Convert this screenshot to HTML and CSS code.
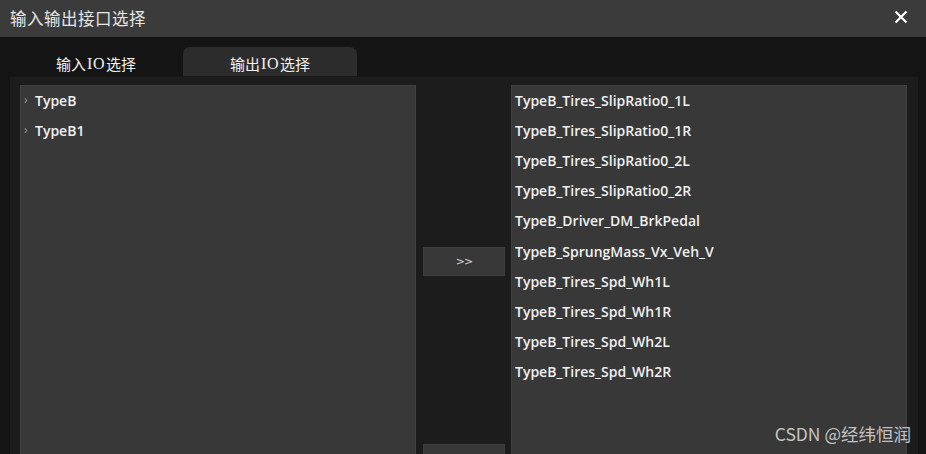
FILE: index.html
```html
<!DOCTYPE html>
<html lang="zh">
<head>
<meta charset="utf-8">
<title>输入输出接口选择</title>
<link rel="stylesheet" href="styles.css">
</head>
<body>
<div class="dialog">
  <div class="titlebar">
    <span class="title">输入输出接口选择</span>
    <svg class="close" width="14" height="14" viewBox="0 0 14 14"><path d="M1.5 1.5 L12.5 12.5 M12.5 1.5 L1.5 12.5" stroke="#ffffff" stroke-width="2.2" fill="none"/></svg>
  </div>
  <div class="content">
    <div class="tabs">
      <div class="tab">输入<span class="io">IO</span>选择</div>
      <div class="tab active">输出<span class="io">IO</span>选择</div>
    </div>
    <div class="panel">
      <div class="list tree">
        <div class="row"><span class="chev">›</span>TypeB</div>
        <div class="row"><span class="chev">›</span>TypeB1</div>
      </div>
      <div class="middle">
        <div class="btn">&gt;&gt;</div>
        <div class="btn second"></div>
      </div>
      <div class="list plain">
        <div class="row">TypeB_Tires_SlipRatio0_1L</div>
        <div class="row">TypeB_Tires_SlipRatio0_1R</div>
        <div class="row">TypeB_Tires_SlipRatio0_2L</div>
        <div class="row">TypeB_Tires_SlipRatio0_2R</div>
        <div class="row">TypeB_Driver_DM_BrkPedal</div>
        <div class="row">TypeB_SprungMass_Vx_Veh_V</div>
        <div class="row">TypeB_Tires_Spd_Wh1L</div>
        <div class="row">TypeB_Tires_Spd_Wh1R</div>
        <div class="row">TypeB_Tires_Spd_Wh2L</div>
        <div class="row">TypeB_Tires_Spd_Wh2R</div>
      </div>
    </div>
  </div>
  <div class="watermark">CSDN @经纬恒润</div>
</div>
</body>
</html>
```
FILE: styles.css
```css
html, body {
  margin: 0;
  padding: 0;
  background: #141414;
  overflow: hidden;
}
body {
  width: 926px;
  height: 454px;
  font-family: "Noto Sans CJK SC", "Noto Sans", sans-serif;
  color: #ffffff;
}
.dialog {
  position: relative;
  width: 926px;
  height: 454px;
  overflow: hidden;
}
.titlebar {
  height: 37px;
  background: #3b3b3b;
  display: flex;
  align-items: center;
  justify-content: space-between;
  padding: 0 18px 0 10px;
  box-sizing: border-box;
}
.title {
  font-size: 16.5px;
  color: #e6e6e6;
  letter-spacing: 0.5px;
  margin-top: -2px;
}
.close {
  display: block;
  margin-top: -3px;
}
.content {
  padding: 10px 8px 0 10px;
}
.tabs {
  display: flex;
  gap: 1px;
  height: 29px;
}
.tab {
  width: 172px;
  height: 29px;
  display: flex;
  align-items: center;
  justify-content: center;
  font-size: 15px;
  color: #f2f2f2;
  border-radius: 7px 7px 0 0;
  padding-top: 4px;
  box-sizing: border-box;
}
.tab.active {
  width: 174px;
  background: #2c2c2c;
}
.io {
  font-family: "Liberation Serif", "DejaVu Serif", serif;
  font-size: 16px;
  margin: 0 1px;
  letter-spacing: 0.5px;
}
.panel {
  background: #1c1c1c;
  border-top: 1px solid #181818;
  height: 400px;
  display: flex;
  padding: 8px 11px 0 10px;
  box-sizing: border-box;
}
.list {
  width: 396px;
  height: 420px;
  background: #383838;
  border: 1px solid #404040;
  box-sizing: border-box;
  flex: none;
}
.row {
  height: 30.2px;
  box-sizing: border-box;
  padding-bottom: 2px;
  display: flex;
  align-items: center;
  font-family: "Open Sans", "Noto Sans", sans-serif;
  font-weight: 600;
  font-size: 14px;
  color: #f0f0f0;
  letter-spacing: 0;
}
.tree .row {
  padding-left: 3px;
}
.plain .row {
  padding-left: 3px;
}
.chev {
  width: 11px;
  font-size: 12px;
  color: #9a9a9a;
  font-weight: 400;
  margin-top: -2px;
}
.middle {
  width: 95px;
  flex: none;
  display: flex;
  flex-direction: column;
  padding: 162px 6px 0 7px;
  box-sizing: border-box;
  gap: 168px;
}
.btn {
  height: 29px;
  background: #383838;
  border: 1px solid #3e3e3e;
  box-sizing: border-box;
  display: flex;
  align-items: center;
  justify-content: center;
  font-family: "DejaVu Sans", sans-serif;
  font-size: 11px;
  color: #d8d8d8;
  letter-spacing: -1px;
}
.watermark {
  position: absolute;
  right: 15px;
  bottom: 8px;
  font-size: 17.5px;
  color: #c4c4c4;
  font-family: "Noto Sans CJK SC", "Noto Sans", sans-serif;
}
```
